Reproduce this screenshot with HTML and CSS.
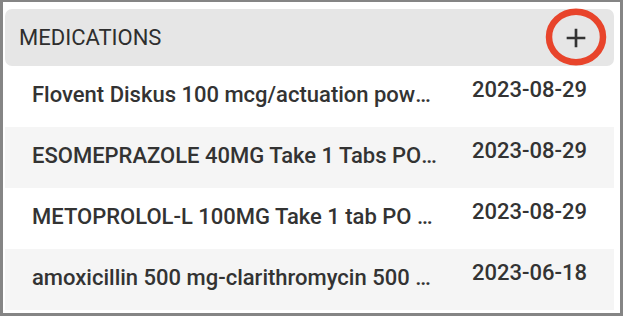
FILE: index.html
```html
<!DOCTYPE html>
<html>
<head>
<meta charset="utf-8">
<link rel="stylesheet" href="styles.css">
</head>
<body>
<div class="frame">
  <div class="panel">
    <div class="header">
      <span class="title">MEDICATIONS</span>
      <button class="add" aria-label="Add medication">
        <svg viewBox="0 0 24 24" width="32" height="32"><path d="M19 13h-6v6h-2v-6H5v-2h6V5h2v6h6v2z" fill="#333"/></svg>
      </button>
      <svg class="mark" width="66" height="64" viewBox="0 0 66 64"><ellipse cx="33" cy="32" rx="27" ry="25.2" fill="none" stroke="#e8442b" stroke-width="6.5"/></svg>
    </div>
    <div class="row">
      <div class="name">Flovent Diskus 100 mcg/actuation powder for inhalation</div>
      <div class="date">2023-08-29</div>
    </div>
    <div class="row alt">
      <div class="name">ESOMEPRAZOLE 40MG Take 1 Tabs PO daily</div>
      <div class="date">2023-08-29</div>
    </div>
    <div class="row">
      <div class="name">METOPROLOL-L 100MG Take 1 tab PO daily</div>
      <div class="date">2023-08-29</div>
    </div>
    <div class="row alt">
      <div class="name">amoxicillin 500 mg-clarithromycin 500 mg-lansoprazole</div>
      <div class="date">2023-06-18</div>
    </div>
  </div>
</div>
</body>
</html>
```

FILE: styles.css
```css
* { box-sizing: border-box; }
html, body { margin: 0; padding: 0; background: #fff; }
body { font-family: Roboto, "Liberation Sans", sans-serif; color: #333; }
.frame {
  width: 623px;
  height: 316px;
  border: 3px solid #858585;
  border-top-width: 2px;
  background: #fff;
  overflow: hidden;
}
.panel {
  padding: 7px 6px 0 2px;
}
.header {
  position: relative;
  height: 57px;
  background: #e6e6e6;
  border-radius: 7px;
  display: flex;
  align-items: center;
  justify-content: space-between;
  padding: 0 14px 0 14px;
}
.title {
  font-size: 22px;
  font-weight: 400;
  color: #2e2e2e;
}
.add {
  border: 0;
  background: transparent;
  padding: 0;
  margin-right: 8px;
  width: 32px;
  height: 32px;
  display: flex;
  align-items: center;
  justify-content: center;
}
.add svg { display: block; }
.mark {
  position: absolute;
  left: 538px;
  top: -4px;
  pointer-events: none;
}
.row {
  display: flex;
  align-items: flex-start;
  height: 61px;
  padding: 0 27px;
  gap: 30px;
  background: #fff;
}
.row.alt { background: #f5f5f5; }
.name {
  flex: 1;
  min-width: 0;
  white-space: nowrap;
  overflow: hidden;
  text-overflow: ellipsis;
  font-size: 22px;
  font-weight: 500;
  line-height: 26px;
  padding-top: 16px;
}
.date {
  font-size: 22px;
  font-weight: 500;
  line-height: 26px;
  padding-top: 11px;
  white-space: nowrap;
}
```
